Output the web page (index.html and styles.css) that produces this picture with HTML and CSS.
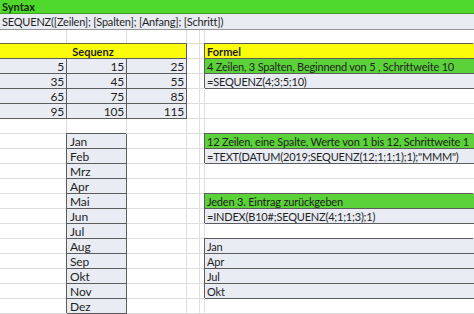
FILE: index.html
```html
<!DOCTYPE html>
<html lang="de">
<head>
<meta charset="utf-8">
<title>SEQUENZ</title>
<link rel="stylesheet" href="styles.css">
</head>
<body>
<div class="sheet">
  <div class="title">Syntax</div>
  <div class="syntax">SEQUENZ([Zeilen]; [Spalten]; [Anfang]; [Schritt])</div>

  <div class="seq">
    <div class="cell head yellow">Sequenz</div>
    <div class="cell num">5</div><div class="cell num">15</div><div class="cell num">25</div>
    <div class="cell num">35</div><div class="cell num">45</div><div class="cell num">55</div>
    <div class="cell num">65</div><div class="cell num">75</div><div class="cell num">85</div>
    <div class="cell num">95</div><div class="cell num">105</div><div class="cell num">115</div>
  </div>

  <div class="box box-formel">
    <div class="cell yellow bold">Formel</div>
    <div class="cell green">4 Zeilen, 3 Spalten, Beginnend von 5 , Schrittweite 10</div>
    <div class="cell light">=SEQUENZ(4;3;5;10)</div>
  </div>

  <div class="box box-text">
    <div class="cell green">12 Zeilen, eine Spalte, Werte von 1 bis 12, Schrittweite 1</div>
    <div class="cell light">=TEXT(DATUM(2019;SEQUENZ(12;1;1;1);1);"MMM")</div>
  </div>

  <div class="box box-index">
    <div class="cell green">Jeden 3. Eintrag zurückgeben</div>
    <div class="cell light">=INDEX(B10#;SEQUENZ(4;1;1;3);1)</div>
  </div>

  <div class="box box-result">
    <div class="cell light">Jan</div>
    <div class="cell light">Apr</div>
    <div class="cell light">Jul</div>
    <div class="cell light">Okt</div>
  </div>

  <div class="box months">
    <div class="cell light">Jan</div>
    <div class="cell light">Feb</div>
    <div class="cell light">Mrz</div>
    <div class="cell light">Apr</div>
    <div class="cell light">Mai</div>
    <div class="cell light">Jun</div>
    <div class="cell light">Jul</div>
    <div class="cell light">Aug</div>
    <div class="cell light">Sep</div>
    <div class="cell light">Okt</div>
    <div class="cell light">Nov</div>
    <div class="cell light">Dez</div>
  </div>
</div>
</body>
</html>
```

FILE: styles.css
```css
html, body {
  margin: 0;
  padding: 0;
  background: #fff;
}

.sheet {
  width: 474px;
  height: 314px;
  overflow: hidden;
  display: grid;
  grid-template-columns: 67px 60px 60px 13px 5px 269px;
  grid-template-rows: 14px repeat(21, 15px);
  font-family: Lato, "Liberation Sans", sans-serif;
  font-size: 11px;
  letter-spacing: -0.2px;
  line-height: 14px;
  color: #1f1f1f;
  background-color: #fff;
  background-image:
    linear-gradient(to right,
      transparent 66px, #dedede 66px 67px,
      transparent 67px 126px, #dedede 126px 127px,
      transparent 127px 186px, #dedede 186px 187px,
      transparent 187px 199px, #dedede 199px 200px,
      transparent 200px 204px, #dedede 204px 205px,
      transparent 205px),
    linear-gradient(to bottom, transparent 14px, #dedede 14px);
  background-size: 100% 100%, 100% 15px;
  background-position: 0 0, 0 14px;
  background-repeat: no-repeat, repeat;
}

.title {
  grid-column: 1 / -1;
  grid-row: 1;
  background: #4fd92d;
  border-bottom: 1px solid #3f9a2a;
  box-sizing: border-box;
  font-weight: bold;
  color: #16260c;
  padding-left: 2px;
  line-height: 13px;
  letter-spacing: 0;
}

.syntax {
  grid-column: 1 / -1;
  grid-row: 2;
  background: #e9ecf2;
  box-shadow: 0 1px 0 #959595;
  padding-left: 2px;
  line-height: 15px;
  position: relative;
}

.cell {
  box-sizing: border-box;
  padding: 1px 2px 0;
  white-space: nowrap;
  overflow: hidden;
  line-height: 14px;
}

.yellow { background: #fbfb0c; }
.green { background: #5bd23a; }
.light { background: #e9ecf2; }
.bold { font-weight: bold; letter-spacing: 0; }

.seq {
  grid-column: 1 / 4;
  grid-row: 4 / 9;
  display: grid;
  grid-template-columns: 66px 59px 59px;
  grid-auto-rows: 14px;
  gap: 1px;
  padding: 0 1px 1px 0;
  background: #5c5c5c;
  box-shadow: 0 -1px 0 #6b6b3a;
}

.seq .head {
  grid-column: 1 / -1;
  text-align: center;
  font-weight: bold;
  letter-spacing: 0;
}

.seq .num {
  background: #e9ecf2;
  text-align: right;
  padding-right: 2px;
  font-size: 12px;
}

.box {
  display: grid;
  grid-auto-rows: 14px;
  gap: 1px;
  padding-bottom: 1px;
  background: #5c5c5c;
  box-shadow: -1px -1px 0 #5c5c5c;
}

.box-formel { grid-column: 6; grid-row: 4 / 7; }
.box-text { grid-column: 6; grid-row: 10 / 12; }
.box-index { grid-column: 6; grid-row: 14 / 16; }
.box-result { grid-column: 6; grid-row: 17 / 21; }

.months {
  grid-column: 2;
  grid-row: 10 / 22;
  padding-right: 1px;
}

.months .cell { padding-left: 3px; font-size: 12px; letter-spacing: -0.1px; }
```
